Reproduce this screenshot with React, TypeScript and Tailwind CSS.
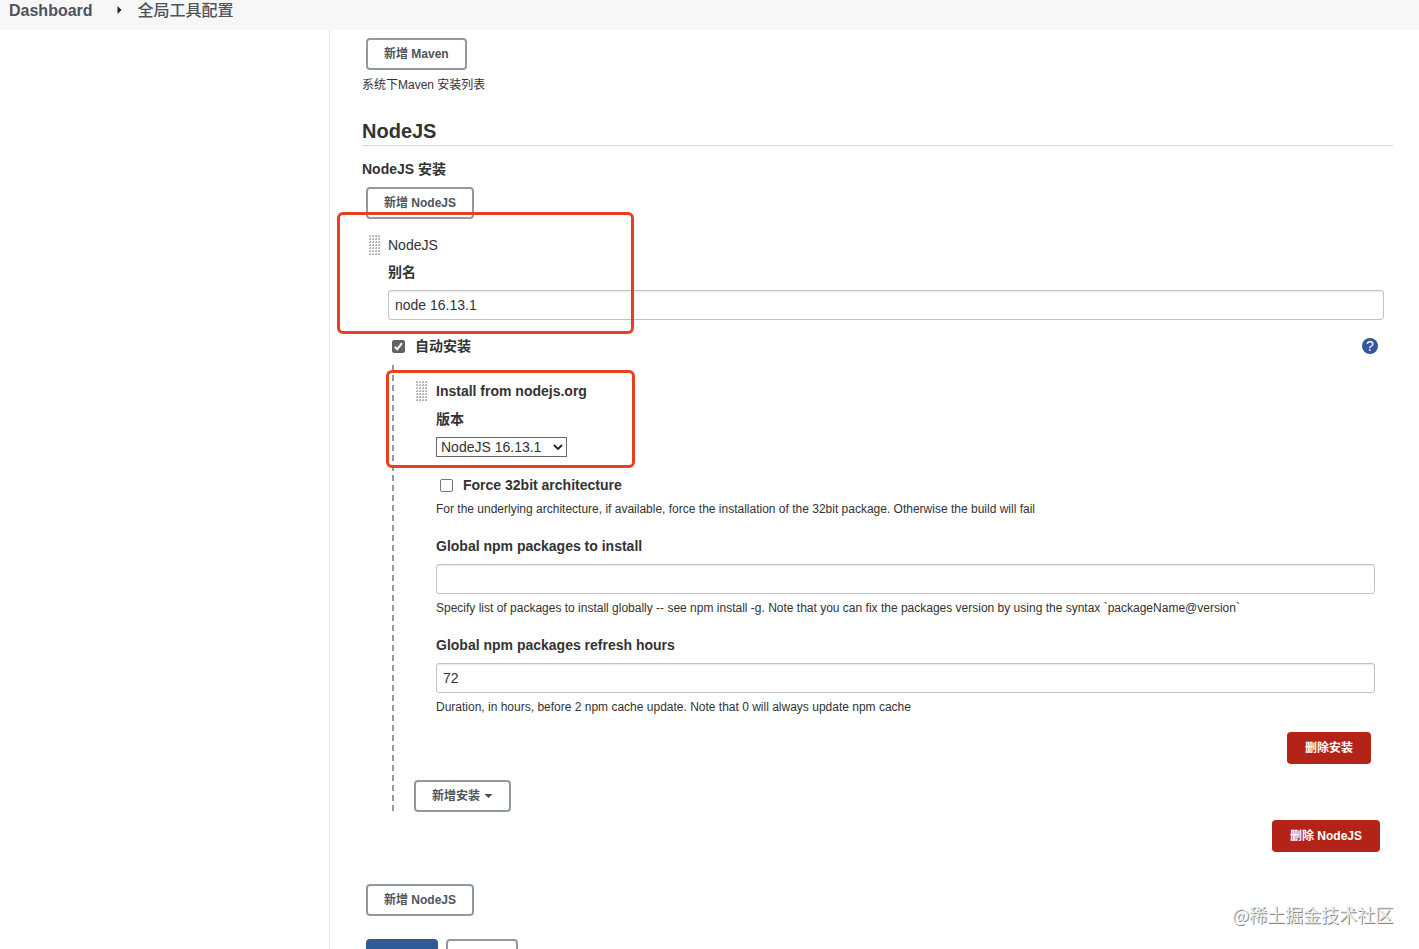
import type { ReactNode } from 'react';

function Grip() {
  const rows = [0, 1, 2, 3, 4, 5, 6];
  const cols = [0, 1, 2, 3];
  return (
    <svg width="12" height="20" viewBox="0 0 12 20" className="shrink-0" aria-hidden="true">
      {rows.map((r) =>
        cols.map((c) => (
          <g key={`${r}-${c}`}>
            <rect x={c * 3} y={r * 3} width="2" height="2" fill="#dedbd8" />
            <rect x={c * 3 + 1} y={r * 3} width="1" height="2" fill="#b5b1ae" />
            <rect x={c * 3} y={r * 3 + 1} width="1" height="1" fill="#b5b1ae" />
          </g>
        )),
      )}
    </svg>
  );
}

function OutlineButton({ children }: { children: ReactNode }) {
  return (
    <button
      type="button"
      className="flex h-8 items-center gap-1 rounded border-2 border-[#8f9aa5] bg-white px-4 text-xs font-bold text-[#4d545d]"
    >
      {children}
    </button>
  );
}

function DangerButton({ children }: { children: ReactNode }) {
  return (
    <button type="button" className="h-8 rounded bg-[#b42318] px-[18px] text-xs font-bold text-white">
      {children}
    </button>
  );
}

const inputClass =
  'mt-2 block h-[30px] w-full rounded-[3px] border border-[#c3c3c3] bg-white px-1.5 text-sm text-[#333] shadow-[inset_0_1px_1px_rgba(0,0,0,0.08)] outline-none';
const labelClass = 'block text-sm leading-5 font-bold';
const helpClass = 'mt-[5px] text-xs leading-[18px]';
const checkboxClass =
  'peer size-[13px] appearance-none rounded-[2px] border border-[#767676] bg-white checked:border-[#636363] checked:bg-[#636363]';

function Checkbox({ id, defaultChecked }: { id: string; defaultChecked?: boolean }) {
  return (
    <span className="relative grid size-[13px] shrink-0">
      <input id={id} type="checkbox" defaultChecked={defaultChecked} className={checkboxClass} />
      <svg
        viewBox="0 0 13 13"
        className="pointer-events-none absolute inset-0 hidden size-[13px] peer-checked:block"
        fill="none"
        stroke="#fff"
        strokeWidth="2"
        aria-hidden="true"
      >
        <path d="M2.8 6.8 5.2 9.3 10 3.2" />
      </svg>
    </span>
  );
}

function InstallerForm() {
  return (
    <section className="pr-[9px]">
      <div className="relative ml-[22px]">
        <div className="flex items-center gap-2">
          <Grip />
          <h3 className="text-sm leading-5 font-bold">Install from nodejs.org</h3>
        </div>
        <div className="pl-5">
          <label htmlFor="version" className={`${labelClass} mt-2`}>
            版本
          </label>
          <div className="relative mt-2 w-[131px]">
            <select
              id="version"
              className="block h-5 w-full appearance-none border border-[#666] bg-white px-1 text-sm leading-4 text-[#333]"
            >
              <option>NodeJS 16.13.1</option>
            </select>
            <svg
              viewBox="0 0 10 6"
              className="pointer-events-none absolute top-[7px] right-1 h-1.5 w-2.5"
              fill="none"
              stroke="#222"
              strokeWidth="1.8"
              aria-hidden="true"
            >
              <path d="M1 1 5 5 9 1" />
            </svg>
          </div>
          <div className="mt-[18px] flex items-center gap-2.5 pl-1">
            <Checkbox id="force32" />
            <label htmlFor="force32" className={labelClass}>
              Force 32bit architecture
            </label>
          </div>
          <p className={helpClass}>
            For the underlying architecture, if available, force the installation of the 32bit package. Otherwise the
            build will fail
          </p>
          <label htmlFor="packages" className={`${labelClass} mt-[18px]`}>
            Global npm packages to install
          </label>
          <input id="packages" type="text" className={inputClass} />
          <p className={helpClass}>
            Specify list of packages to install globally -- see npm install -g. Note that you can fix the packages
            version by using the syntax `packageName@version`
          </p>
          <label htmlFor="refresh" className={`${labelClass} mt-[18px]`}>
            Global npm packages refresh hours
          </label>
          <input id="refresh" type="text" defaultValue="72" className={inputClass} />
          <p className={helpClass}>
            Duration, in hours, before 2 npm cache update. Note that 0 will always update npm cache
          </p>
          <div className="mt-4 flex justify-end pr-1">
            <DangerButton>删除安装</DangerButton>
          </div>
        </div>
        <div
          className="pointer-events-none absolute -top-[11px] -left-[30px] h-[98px] w-[249px] rounded-md border-3 border-[#e83f20]"
          aria-hidden="true"
        />
      </div>
      <div className="mt-4 ml-5 flex">
        <OutlineButton>
          新增安装
          <svg width="9" height="4" viewBox="0 0 8 4" fill="#444b54" aria-hidden="true">
            <path d="M0 0h8L4 4z" />
          </svg>
        </OutlineButton>
      </div>
    </section>
  );
}

export default function App() {
  return (
    <div className="relative flex h-screen flex-col overflow-hidden bg-white font-['Liberation_Sans','Noto_Sans_CJK_SC',sans-serif] text-[#333]">
      <nav
        aria-label="Breadcrumb"
        className="flex h-[30px] shrink-0 items-start bg-[#f7f7f7] pt-px pl-[9px] text-base leading-5 font-bold text-[#4d545d]"
      >
        <a href="#dashboard">Dashboard</a>
        <svg width="5" height="8" viewBox="0 0 5 8" className="mt-[5px] mr-4 ml-6" fill="#222" aria-hidden="true">
          <path d="M0.5 0 4.5 4 0.5 8z" />
        </svg>
        <a href="#tools" className="font-medium">
          全局工具配置
        </a>
      </nav>

      <div className="flex min-h-0 flex-1">
        <aside className="w-[330px] shrink-0 border-r border-[#e6e6e6]" />
        <main className="min-w-0 flex-1 overflow-hidden pt-2 pr-[26px] pl-8">
          <div className="flex pl-1">
            <OutlineButton>新增 Maven</OutlineButton>
          </div>
          <p className="mt-1.5 text-xs leading-[18px]">系统下Maven 安装列表</p>

          <h2 className="mt-[23px] border-b border-[#d9d9d9] text-xl leading-7 font-bold">NodeJS</h2>
          <h3 className={`${labelClass} mt-[13px]`}>NodeJS 安装</h3>
          <div className="mt-2 flex pl-1">
            <OutlineButton>新增 NodeJS</OutlineButton>
          </div>

          <div className="relative mt-4 pr-[9px] pl-[7px]">
            <div className="flex items-center gap-[7px]">
              <Grip />
              <span className="text-sm leading-5">NodeJS</span>
            </div>
            <div className="pl-[19px]">
              <label htmlFor="alias" className={`${labelClass} mt-[7px]`}>
                别名
              </label>
              <input id="alias" type="text" defaultValue="node 16.13.1" className={inputClass} />
              <div className="mt-4 flex items-center gap-2.5 pl-1">
                <Checkbox id="auto" defaultChecked />
                <label htmlFor="auto" className={labelClass}>
                  自动安装
                </label>
                <a
                  href="#help"
                  aria-label="Help"
                  className="mr-1.5 ml-auto grid size-4 place-items-center rounded-full bg-[#2f5a98] text-sm leading-4 text-white"
                >
                  ?
                </a>
              </div>
              <div className="flex pt-[9px] pl-1">
                <svg width="2" className="shrink-0" aria-hidden="true">
                  <line x1="1" y1="0" x2="1" y2="100%" stroke="#999" strokeWidth="2" strokeDasharray="6 4" />
                </svg>
                <div className="min-w-0 flex-1 pt-4">
                  <InstallerForm />
                </div>
              </div>
            </div>
            <div
              className="pointer-events-none absolute -top-[23px] -left-[25px] h-[122px] w-[297px] rounded-md border-3 border-[#e83f20]"
              aria-hidden="true"
            />
          </div>

          <div className="mt-2 flex justify-end pr-[13px]">
            <DangerButton>删除 NodeJS</DangerButton>
          </div>
          <div className="mt-8 flex pl-1">
            <OutlineButton>新增 NodeJS</OutlineButton>
          </div>
          <div className="mt-[23px] flex gap-2 pl-1">
            <button type="button" aria-label="Save" className="h-8 w-[72px] rounded bg-[#2f5a98]" />
            <button type="button" aria-label="Apply" className="h-8 w-[72px] rounded border-2 border-[#8f9aa5] bg-white" />
          </div>
        </main>
      </div>
      <div className="pointer-events-none absolute right-[26px] bottom-[21px] font-['Noto_Sans_CJK_SC',sans-serif] text-lg leading-7 text-[#ececec] [text-shadow:1px_1px_0_#888]">
        @稀土掘金技术社区
      </div>
    </div>
  );
}
